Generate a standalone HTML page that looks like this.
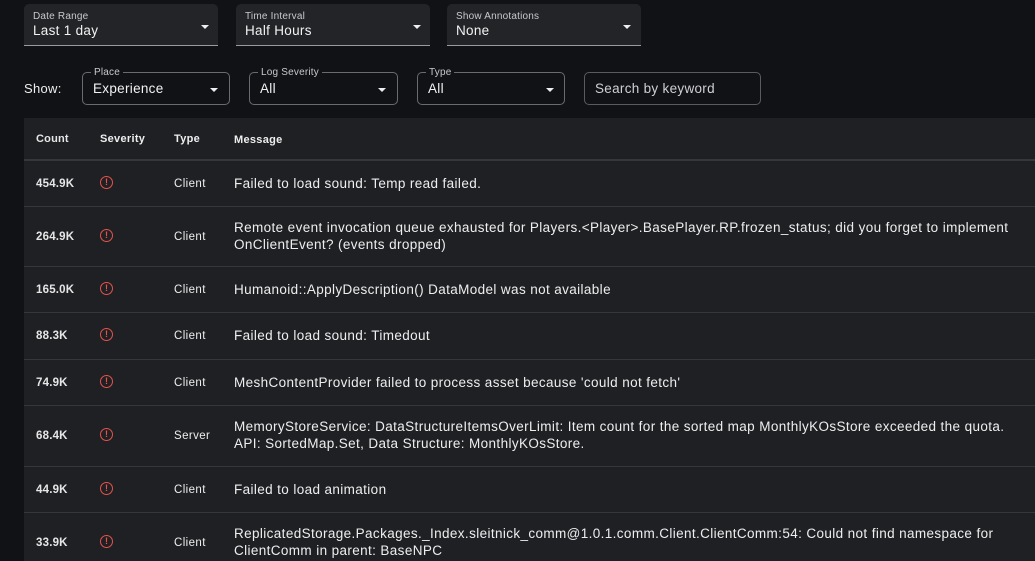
<!DOCTYPE html>
<html><head><style>
*{margin:0;padding:0;box-sizing:border-box}
html,body{width:1035px;height:561px;overflow:hidden}
body{background:#111216;font-family:"Liberation Sans",sans-serif;color:#eee;position:relative}
.dd{position:absolute;top:4px;height:42px;background:#232428;border-radius:5px 5px 0 0;border-bottom:1px solid #9a9ba0}
.dd .l{position:absolute;left:9px;top:7px;font-size:10px;color:#c8c9cc;letter-spacing:.2px}
.dd .v{position:absolute;left:9px;top:19px;font-size:13.5px;color:#f2f2f2;letter-spacing:.3px}
.arr{position:absolute;width:0;height:0;border-left:4px solid transparent;border-right:4px solid transparent;border-top:4px solid #eee}
.ob{position:absolute;top:72px;height:33px;border:1px solid #6a6b70;border-radius:5px}
.ob .l{position:absolute;left:8px;top:-6px;font-size:10px;color:#c8c9cc;background:#111216;padding:0 3px;letter-spacing:.2px}
.ob .v{position:absolute;left:10px;top:8px;font-size:13.5px;color:#f2f2f2;letter-spacing:.3px}
.tbl{position:absolute;left:24px;top:118px;width:1011px;height:443px;background:#1f2024}
.row{position:absolute;left:0;width:1011px;border-bottom:1px solid #36373b;font-size:11.5px;letter-spacing:.4px}
.row div{position:absolute}
.c{left:12px;font-weight:bold;letter-spacing:.2px;color:#e6e6e6}.s{left:76px}.t{left:150px}.m{left:210px;font-size:13.5px;line-height:17px;width:790px;letter-spacing:.38px}
.ic{width:13px;height:13px;border:1.5px solid #e5534b;border-radius:50%;color:#e5534b;font-size:9px;font-weight:bold;text-align:center;line-height:10px;letter-spacing:0}
.hd{font-weight:bold;font-size:11px}
</style></head><body>
<div class="dd" style="left:24px;width:194px"><div class="l">Date Range</div><div class="v">Last 1 day</div><div class="arr" style="left:177px;top:21px"></div></div>
<div class="dd" style="left:236px;width:194px"><div class="l">Time Interval</div><div class="v">Half Hours</div><div class="arr" style="left:177px;top:21px"></div></div>
<div class="dd" style="left:447px;width:194px"><div class="l">Show Annotations</div><div class="v">None</div><div class="arr" style="left:176px;top:21px"></div></div>
<div style="position:absolute;left:24px;top:81px;font-size:13px;letter-spacing:.3px">Show:</div>
<div class="ob" style="left:82px;width:148px"><div class="l">Place</div><div class="v">Experience</div><div class="arr" style="left:127px;top:15px"></div></div>
<div class="ob" style="left:249px;width:149px"><div class="l">Log Severity</div><div class="v">All</div><div class="arr" style="left:128px;top:15px"></div></div>
<div class="ob" style="left:417px;width:148px"><div class="l">Type</div><div class="v">All</div><div class="arr" style="left:128px;top:15px"></div></div>
<div class="ob" style="left:584px;width:177px;border-color:#5a5b60"><div class="v" style="color:#d0d0d4">Search by keyword</div></div>
<div class="tbl">
<div class="row hd" style="top:0;height:43px;border-bottom:2px solid #36373b;letter-spacing:.3px"><div class="c" style="top:15px">Count</div><div class="s" style="top:15px">Severity</div><div class="t" style="top:15px">Type</div><div class="m" style="top:14px;font-size:11px;letter-spacing:.3px">Message</div></div>
<div class="row" style="top:43px;height:46px"><div class="c" style="top:17px">454.9K</div><div class="s ic" style="top:15px">!</div><div class="t" style="top:17px">Client</div><div class="m" style="top:14px">Failed to load sound: Temp read failed.</div></div>
<div class="row" style="top:89px;height:60px"><div class="c" style="top:24px">264.9K</div><div class="s ic" style="top:22px">!</div><div class="t" style="top:24px">Client</div><div class="m" style="top:12px">Remote event invocation queue exhausted for Players.&lt;Player&gt;.BasePlayer.RP.frozen_status; did you forget to implement<br>OnClientEvent? (events dropped)</div></div>
<div class="row" style="top:149px;height:46px"><div class="c" style="top:17px">165.0K</div><div class="s ic" style="top:15px">!</div><div class="t" style="top:17px">Client</div><div class="m" style="top:14px">Humanoid::ApplyDescription() DataModel was not available</div></div>
<div class="row" style="top:195px;height:47px"><div class="c" style="top:17px">88.3K</div><div class="s ic" style="top:15px">!</div><div class="t" style="top:17px">Client</div><div class="m" style="top:14px">Failed to load sound: Timedout</div></div>
<div class="row" style="top:242px;height:46px"><div class="c" style="top:17px">74.9K</div><div class="s ic" style="top:15px">!</div><div class="t" style="top:17px">Client</div><div class="m" style="top:14px">MeshContentProvider failed to process asset because 'could not fetch'</div></div>
<div class="row" style="top:288px;height:61px"><div class="c" style="top:24px">68.4K</div><div class="s ic" style="top:22px">!</div><div class="t" style="top:24px">Server</div><div class="m" style="top:12px">MemoryStoreService: DataStructureItemsOverLimit: Item count for the sorted map MonthlyKOsStore exceeded the quota.<br>API: SortedMap.Set, Data Structure: MonthlyKOsStore.</div></div>
<div class="row" style="top:349px;height:46px"><div class="c" style="top:17px">44.9K</div><div class="s ic" style="top:15px">!</div><div class="t" style="top:17px">Client</div><div class="m" style="top:14px">Failed to load animation</div></div>
<div class="row" style="top:395px;height:60px;border:none"><div class="c" style="top:24px">33.9K</div><div class="s ic" style="top:22px">!</div><div class="t" style="top:24px">Client</div><div class="m" style="top:12px">ReplicatedStorage.Packages._Index.sleitnick_comm@1.0.1.comm.Client.ClientComm:54: Could not find namespace for<br>ClientComm in parent: BaseNPC</div></div>
</div>
</body></html>
